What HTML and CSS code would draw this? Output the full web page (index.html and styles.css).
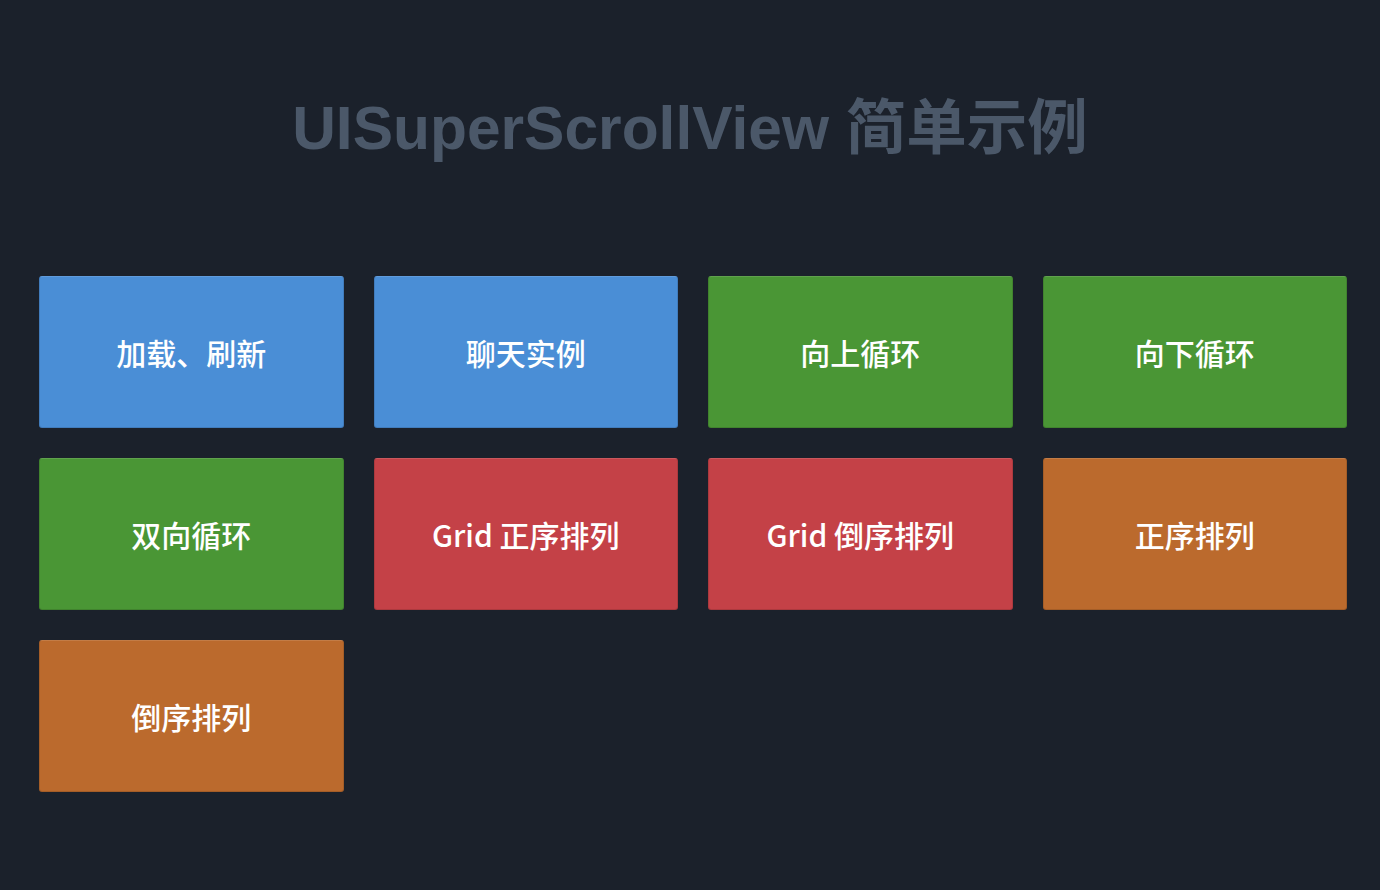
FILE: index.html
```html
<!DOCTYPE html>
<html lang="zh-CN">
<head>
    <meta charset="UTF-8">
    <meta name="viewport" content="width=device-width, initial-scale=1.0">
    <title>UISuperScrollView 简单示例</title>
    <link rel="stylesheet" href="styles.css">
</head>
<body>
    <h1 class="head">UISuperScrollView 简单示例</h1>
    <div class="menu">
        <a class="btn blue" href="#">加载、刷新</a>
        <a class="btn blue" href="#">聊天实例</a>
        <a class="btn green" href="#">向上循环</a>
        <a class="btn green" href="#">向下循环</a>
        <a class="btn green" href="#">双向循环</a>
        <a class="btn red" href="#">Grid 正序排列</a>
        <a class="btn red" href="#">Grid 倒序排列</a>
        <a class="btn orange" href="#">正序排列</a>
        <a class="btn orange" href="#">倒序排列</a>
    </div>
</body>
</html>
```

FILE: styles.css
```css
body {
    margin: 0;
    background-color: #1b212b;
    font-family: "Liberation Sans", "Noto Sans CJK SC", sans-serif;
}

.head {
    margin: 0;
    padding-top: 93px;
    margin-bottom: 113px;
    height: 70px;
    line-height: 70px;
    font-size: 60.5px;
    font-weight: bold;
    text-align: center;
    color: #4b5869;
}

.menu {
    display: grid;
    grid-template-columns: repeat(4, 1fr);
    grid-auto-rows: 152px;
    gap: 30px;
    padding: 0 33px 0 39px;
}

.btn {
    display: flex;
    align-items: center;
    justify-content: center;
    border-radius: 3px;
    border: 1px solid rgba(0, 0, 0, 0.12);
    border-top-color: rgba(255, 255, 255, 0.12);
    color: white;
    font-family: "Noto Sans CJK SC", "Liberation Sans", sans-serif;
    font-size: 30px;
    font-weight: 500;
    text-decoration: none;
}

.blue {
    background: #4a8ed6;
}
.green {
    background: #4a9635;
}
.red {
    background: #c44147;
}
.orange {
    background: #bb6a2d;
}
```
